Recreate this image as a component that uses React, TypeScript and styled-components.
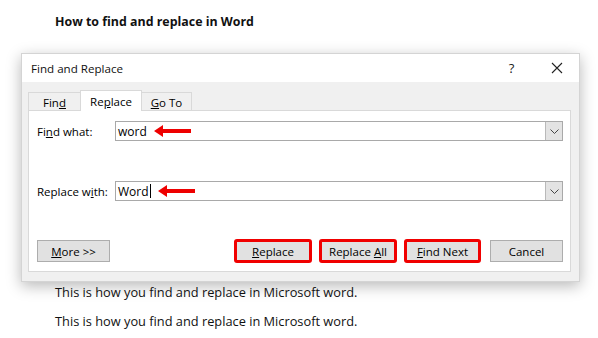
import React from "react";
import styled, { createGlobalStyle } from "styled-components";

const GlobalStyle = createGlobalStyle`
  html, body {
    margin: 0;
    padding: 0;
    background: #ffffff;
    font-family: "Open Sans", "Noto Sans", sans-serif;
  }
`;

const Page = styled.div`
  width: 598px;
  height: 338px;
  overflow: hidden;
  padding-top: 12px;
  box-sizing: border-box;
`;

const Heading = styled.h1`
  margin: 0 0 0 55px;
  font-size: 12.4px;
  line-height: 20px;
  font-weight: 700;
  color: #111;
`;

const Dialog = styled.div`
  margin: 21px 0 0 21px;
  width: 559px;
  height: 229px;
  display: flex;
  flex-direction: column;
  background: #f0f0f0;
  border: 1px solid #d4d4d4;
  box-sizing: border-box;
  box-shadow: 0 4px 14px rgba(0, 0, 0, 0.28);
  font-size: 11.5px;
  color: #000;
`;

const TitleBar = styled.div`
  height: 28px;
  display: flex;
  align-items: center;
  background: #ffffff;
  padding-left: 9px;
`;

const Title = styled.span`
  flex: 1;
  font-size: 11.6px;
  color: #111;
`;

const TitleButton = styled.span`
  width: 45px;
  display: flex;
  justify-content: center;
  align-items: center;
  font-size: 13px;
  color: #222;
`;

const Body = styled.div`
  flex: 1;
  display: flex;
  flex-direction: column;
  padding: 7px 8px 9px 6px;
`;

const Tabs = styled.div`
  display: flex;
  align-items: flex-end;
  height: 21px;
`;

const Tab = styled.div<{ $active?: boolean; $width: number }>`
  width: ${p => p.$width}px;
  height: ${p => (p.$active ? 21 : 18)}px;
  display: flex;
  align-items: center;
  justify-content: center;
  box-sizing: border-box;
  background: ${p => (p.$active ? "#ffffff" : "#f0f0f0")};
  border: 1px solid #d9d9d9;
  border-bottom: none;
  margin-right: -1px;
  position: relative;
  z-index: ${p => (p.$active ? 1 : 0)};
  margin-bottom: ${p => (p.$active ? -1 : 0)}px;
  padding-top: ${p => (p.$active ? 0 : 2)}px;
`;

const Panel = styled.div`
  flex: 1;
  background: #ffffff;
  border: 1px solid #d9d9d9;
  display: flex;
  flex-direction: column;
  padding: 10px 7px 8px 8px;
`;

const Field = styled.div<{ $gap?: number }>`
  display: flex;
  align-items: center;
  height: 20px;
  margin-top: ${p => p.$gap ?? 0}px;
`;

const Label = styled.label`
  width: 78px;
  flex-shrink: 0;
`;

const Combo = styled.div`
  flex: 1;
  height: 20px;
  display: flex;
  border: 1px solid #a9a9a9;
  box-sizing: border-box;
  align-items: center;
`;

const Value = styled.span`
  flex: 1;
  display: flex;
  align-items: center;
  padding-left: 2px;
  font-size: 12px;
`;

const Caret = styled.span`
  display: inline-block;
  width: 1px;
  height: 14px;
  background: #000;
  margin-left: 1px;
`;

const Drop = styled.span`
  width: 16px;
  height: 18px;
  background: #e3e3e3;
  border-left: 1px solid #b9b9b9;
  display: flex;
  align-items: center;
  justify-content: center;
`;

const Arrow = styled.svg`
  margin-left: 7px;
`;

const Buttons = styled.div`
  margin-top: auto;
  display: flex;
  align-items: center;
`;

const Button = styled.button<{ $hot?: boolean; $width?: number }>`
  width: ${p => p.$width ?? 73}px;
  height: ${p => (p.$hot ? 24 : 22)}px;
  margin-left: ${p => (p.$hot ? 7 : 9)}px;
  padding: 0;
  font-family: inherit;
  font-size: 11.5px;
  color: #000;
  background: #e1e1e1;
  border: ${p => (p.$hot ? "3px solid #f00000" : "1px solid #adadad")};
  border-radius: ${p => (p.$hot ? 3 : 0)}px;
  box-sizing: border-box;
  &:first-child {
    margin-left: 0;
    margin-right: auto;
  }
`;

const Text = styled.p`
  margin: 0 0 0 55px;
  font-size: 12.8px;
  line-height: 20px;
  color: #111;
`;

const Texts = styled.div`
  display: flex;
  flex-direction: column;
  gap: 9px;
  margin-top: 0px;
`;

function RedArrow() {
  return (
    <Arrow width="37" height="12" viewBox="0 0 37 12">
      <polygon points="0,6 9,0 9,4 37,4 37,8 9,8 9,12" fill="#ee0000" />
    </Arrow>
  );
}

function Chevron() {
  return (
    <svg width="9" height="5" viewBox="0 0 9 5">
      <polyline points="0.5,0.5 4.5,4.5 8.5,0.5" fill="none" stroke="#444" strokeWidth="1" />
    </svg>
  );
}

export default function App() {
  return (
    <Page>
      <GlobalStyle />
      <Heading>How to find and replace in Word</Heading>
      <Dialog>
        <TitleBar>
          <Title>Find and Replace</Title>
          <TitleButton>?</TitleButton>
          <TitleButton>
            <svg width="12" height="12" viewBox="0 0 12 12">
              <path d="M1 1 L11 11 M11 1 L1 11" stroke="#222" strokeWidth="1.1" />
            </svg>
          </TitleButton>
        </TitleBar>
        <Body>
          <Tabs>
            <Tab $width={53}>Fin<u>d</u></Tab>
            <Tab $active $width={62}>Re<u>p</u>lace</Tab>
            <Tab $width={51}><u>G</u>o To</Tab>
          </Tabs>
          <Panel>
            <Field>
              <Label>Fi<u>n</u>d what:</Label>
              <Combo>
                <Value>word<RedArrow /></Value>
                <Drop><Chevron /></Drop>
              </Combo>
            </Field>
            <Field $gap={40}>
              <Label>Replace w<u>i</u>th:</Label>
              <Combo>
                <Value>Word<Caret /><RedArrow /></Value>
                <Drop><Chevron /></Drop>
              </Combo>
            </Field>
            <Buttons>
              <Button><u>M</u>ore &gt;&gt;</Button>
              <Button $hot $width={78}><u>R</u>eplace</Button>
              <Button $hot $width={78}>Replace <u>A</u>ll</Button>
              <Button $hot $width={77}><u>F</u>ind Next</Button>
              <Button>Cancel</Button>
            </Buttons>
          </Panel>
        </Body>
      </Dialog>
      <Texts>
        <Text>This is how you find and replace in Microsoft word.</Text>
        <Text>This is how you find and replace in Microsoft word.</Text>
      </Texts>
    </Page>
  );
}
